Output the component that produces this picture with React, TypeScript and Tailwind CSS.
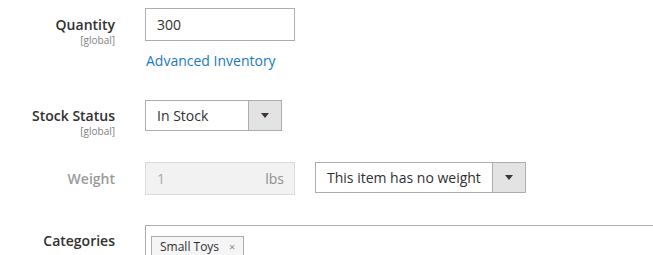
import React from "react";

function Arrow() {
  return (
    <svg width="8" height="5" viewBox="0 0 8 5" className="block">
      <path d="M0 0 L8 0 L4 5 Z" fill="#41362f" />
    </svg>
  );
}

function Label({ text, scope, muted }: { text: string; scope?: boolean; muted?: boolean }) {
  return (
    <div className="w-[115px] shrink-0 text-right">
      <div className={`text-[14px] leading-[19px] font-semibold ${muted ? "text-[#9a9a9a]" : "text-[#303030]"}`}>{text}</div>
      {scope && <div className="text-[10px] leading-[13px] text-[#808080]">[global]</div>}
    </div>
  );
}

export default function App() {
  return (
    <div className="w-[653px] h-[255px] overflow-hidden bg-white" style={{ fontFamily: '"Open Sans", "Liberation Sans", sans-serif' }}>
      <div className="flex flex-col pt-[8px]">
        {/* Quantity */}
        <div className="flex gap-[30px]">
          <div className="pt-[7px]">
            <Label text="Quantity" scope />
          </div>
          <div className="flex flex-col">
            <div className="w-[150px] h-[33px] border border-[#adadad] flex items-center px-[11px] text-[14px] text-[#303030]">300</div>
            <div className="mt-[10px] text-[14px] leading-[19px] text-[#1979c3] pl-[1px]">Advanced Inventory</div>
          </div>
        </div>

        {/* Stock Status */}
        <div className="flex gap-[30px] mt-[30px] h-[31px] items-start">
          <div className="pt-[6px]">
            <Label text="Stock Status" scope />
          </div>
          <div className="w-[137px] h-[31px] border border-[#adadad] flex">
            <div className="flex-1 flex items-center px-[11px] text-[14px] text-[#303030]">In Stock</div>
            <div className="w-[33px] border-l border-[#adadad] bg-[#e3e3e3] flex items-center justify-center">
              <Arrow />
            </div>
          </div>
        </div>

        {/* Weight */}
        <div className="flex gap-[30px] mt-[31px] h-[33px] items-start">
          <div className="pt-[7px]">
            <Label text="Weight" muted />
          </div>
          <div className="w-[150px] h-[33px] border border-[#dadada] bg-[#f2f2f2] flex items-center justify-between pl-[11px] pr-[10px] text-[14px] text-[#a8a8a8]">
            <span>1</span>
            <span className="text-[#8f8f8f]">lbs</span>
          </div>
          <div className="ml-[-10px] w-[211px] h-[31px] border border-[#adadad] flex">
            <div className="flex-1 flex items-center px-[11px] text-[14px] text-[#303030] whitespace-nowrap">This item has no weight</div>
            <div className="w-[34px] border-l border-[#adadad] bg-[#e3e3e3] flex items-center justify-center">
              <Arrow />
            </div>
          </div>
        </div>

        {/* Categories */}
        <div className="flex gap-[30px] mt-[30px]">
          <div className="pt-[6px]">
            <Label text="Categories" />
          </div>
          <div className="w-[600px] h-[40px] border border-[#adadad] border-r-0 border-b-0 pt-[7px] pl-[5px] shrink-0">
            <div className="inline-flex items-center h-[22px] border border-[#adadad] bg-[#f5f5f5] pl-[8px] pr-[8px] text-[12px] text-[#303030] gap-[10px]">
              <span>Small Toys</span>
              <span className="text-[11px] text-[#8a8a8a]">×</span>
            </div>
          </div>
        </div>
      </div>
    </div>
  );
}
